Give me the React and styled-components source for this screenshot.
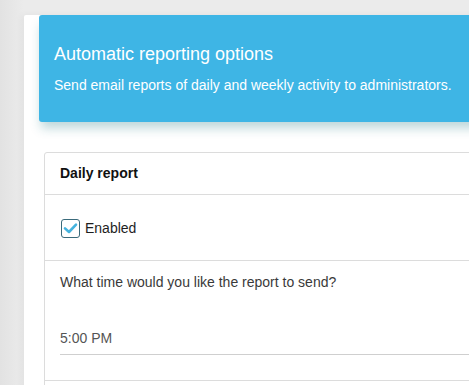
import React from "react";
import styled, { createGlobalStyle } from "styled-components";

const GlobalStyle = createGlobalStyle`
  html, body {
    margin: 0;
    padding: 0;
  }
  body {
    background: #e8e8e8;
    font-family: "Liberation Sans", Arial, Helvetica, sans-serif;
    overflow: hidden;
  }
`;

const Page = styled.div`
  width: 469px;
  height: 385px;
  overflow: hidden;
  padding: 34px 0 0 24px;
  box-sizing: border-box;
  background: linear-gradient(to right, #e2e2e2 0px, #e9e9e9 18px, #ebebeb 24px);
`;

const Card = styled.div`
  width: 500px;
  min-height: 420px;
  background: #fff;
  box-shadow: -3px 0 6px rgba(0, 0, 0, 0.04);
  border-radius: 2px;
`;

const Banner = styled.div`
  margin: -19px 0 0 15px;
  padding: 27px 15px 27px 15px;
  background: #3eb5e5;
  border-radius: 3px;
  color: #fff;
  box-shadow: 0 8px 11px -2px rgba(30, 120, 130, 0.3);
`;

const BannerTitle = styled.div`
  font-size: 18px;
  line-height: 24px;
  margin-bottom: 9px;
`;

const BannerText = styled.div`
  font-size: 14px;
  line-height: 20px;
`;

const Panel = styled.div`
  margin: 30px 0 0 20px;
  border: 1px solid #dcdcdc;
  border-radius: 3px;
  background: #fff;
`;

const PanelHeader = styled.div`
  padding: 10px 15px 11px;
  font-size: 14px;
  line-height: 20px;
  font-weight: bold;
  color: #111;
  border-bottom: 1px solid #dcdcdc;
`;

const Row = styled.div`
  display: flex;
  align-items: center;
  gap: 5px;
  padding: 23px 15px 22px 16px;
  border-bottom: 1px solid #dcdcdc;
`;

const Box = styled.span`
  width: 19px;
  height: 19px;
  box-sizing: border-box;
  border: 1px solid #3a6a7b;
  border-radius: 3px;
  display: inline-flex;
  align-items: center;
  justify-content: center;
  background: #fff;
`;

const Label = styled.span`
  font-size: 14px;
  line-height: 20px;
  color: #1e1e1e;
`;

const Section = styled.div`
  padding: 11px 15px 25px;
  border-bottom: 1px solid #dcdcdc;
`;

const Question = styled.div`
  font-size: 14px;
  line-height: 20px;
  color: #3a3a3a;
  margin-bottom: 30px;
`;

const Field = styled.div`
  padding: 6px 0;
  font-size: 14px;
  line-height: 20px;
  color: #555;
  border-bottom: 1px solid #cfcfcf;
`;

const Spacer = styled.div`
  height: 40px;
`;

export default function App() {
  return (
    <>
      <GlobalStyle />
      <Page>
        <Card>
          <Banner>
            <BannerTitle>Automatic reporting options</BannerTitle>
            <BannerText>
              Send email reports of daily and weekly activity to administrators.
            </BannerText>
          </Banner>
          <Panel>
            <PanelHeader>Daily report</PanelHeader>
            <Row>
              <Box>
                <svg width="17" height="17" viewBox="0 0 17 17">
                  <path
                    d="M3 8.4 L7 12 L14 4.6"
                    fill="none"
                    stroke="#45b3de"
                    strokeWidth="2.6"
                    strokeLinecap="round"
                    strokeLinejoin="round"
                  />
                </svg>
              </Box>
              <Label>Enabled</Label>
            </Row>
            <Section>
              <Question>What time would you like the report to send?</Question>
              <Field>5:00 PM</Field>
            </Section>
            <Spacer />
          </Panel>
        </Card>
      </Page>
    </>
  );
}
